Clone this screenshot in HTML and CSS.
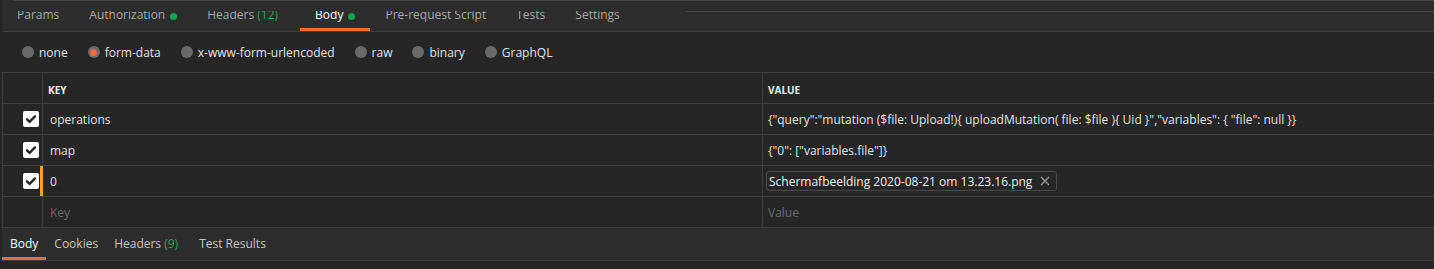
FILE: index.html
```html
<!DOCTYPE html>
<html>
<head>
<meta charset="utf-8">
<link rel="stylesheet" href="styles.css">
</head>
<body>
<div class="page">
  <div class="top-strip"></div>
  <div class="req-tabs">
    <div class="tab"><span class="lbl">Params</span></div>
    <div class="tab"><span class="lbl">Authorization</span><span class="dot"></span></div>
    <div class="tab"><span class="lbl">Headers <span class="count">(12)</span></span></div>
    <div class="tab active"><span class="lbl">Body</span><span class="dot"></span></div>
    <div class="tab"><span class="lbl">Pre-request Script</span></div>
    <div class="tab"><span class="lbl">Tests</span></div>
    <div class="tab"><span class="lbl">Settings</span></div>
  </div>
  <div class="body-types">
    <label class="radio"><span class="circle"></span>none</label>
    <label class="radio"><span class="circle on"></span>form-data</label>
    <label class="radio"><span class="circle"></span>x-www-form-urlencoded</label>
    <label class="radio"><span class="circle"></span>raw</label>
    <label class="radio"><span class="circle"></span>binary</label>
    <label class="radio"><span class="circle"></span>GraphQL</label>
  </div>
  <div class="table">
    <div class="row head">
      <div class="c-check"></div>
      <div class="c-key">KEY</div>
      <div class="c-val">VALUE</div>
    </div>
    <div class="row">
      <div class="c-check"><span class="cb"><svg viewBox="0 0 16 16" width="16" height="16"><path d="M4 8.3l2.6 2.6L12 5.4" fill="none" stroke="#262626" stroke-width="2.4" stroke-linecap="round" stroke-linejoin="round"/></svg></span></div>
      <div class="c-key">operations</div>
      <div class="c-val">{"query":"mutation ($file: Upload!){ uploadMutation( file: $file ){ Uid }","variables": { "file": null }}</div>
    </div>
    <div class="row">
      <div class="c-check"><span class="cb"><svg viewBox="0 0 16 16" width="16" height="16"><path d="M4 8.3l2.6 2.6L12 5.4" fill="none" stroke="#262626" stroke-width="2.4" stroke-linecap="round" stroke-linejoin="round"/></svg></span></div>
      <div class="c-key">map</div>
      <div class="c-val">{"0": ["variables.file"]}</div>
    </div>
    <div class="row">
      <div class="c-check"><span class="cb"><svg viewBox="0 0 16 16" width="16" height="16"><path d="M4 8.3l2.6 2.6L12 5.4" fill="none" stroke="#262626" stroke-width="2.4" stroke-linecap="round" stroke-linejoin="round"/></svg></span></div>
      <div class="c-key focus">0</div>
      <div class="c-val"><span class="chip">Schermafbeelding 2020-08-21 om 13.23.16.png <svg class="x" viewBox="0 0 10 10" width="10" height="10"><path d="M1 1L9 9M9 1L1 9" stroke="#9a9a9a" stroke-width="1.3"/></svg></span></div>
    </div>
    <div class="row">
      <div class="c-check"></div>
      <div class="c-key ph">Key</div>
      <div class="c-val ph">Value</div>
    </div>
  </div>
  <div class="resp-tabs">
    <div class="rtab active"><span>Body</span></div>
    <div class="rtab"><span>Cookies</span></div>
    <div class="rtab"><span>Headers <span class="count">(9)</span></span></div>
    <div class="rtab last"><span>Test Results</span></div>
  </div>
</div>
</body>
</html>
```
FILE: styles.css
```css
html, body {
  margin: 0;
  padding: 0;
  background: #262626;
}
.page {
  width: 1434px;
  height: 269px;
  overflow: hidden;
  font-family: "Open Sans", "Liberation Sans", sans-serif;
  font-size: 12px;
  color: #e2e2e2;
}
.top-strip {
  height: 10px;
  border-top: 1px solid #454545;
  margin-left: 13px;
  background: #2d2d2d;
  box-shadow: -11px 0 0 #2d2d2d;
}
.req-tabs {
  display: flex;
  height: 20px;
  margin-left: 2px;
  background: #2d2d2d;
  border-bottom: 1px solid #3f3f3f;
  position: relative;
  overflow: hidden;
}
.req-tabs::before {
  content: "";
  position: absolute;
  left: 684px;
  right: 0;
  top: 0;
  height: 1px;
  background: #444;
}
.tab {
  display: flex;
  align-items: flex-start;
  padding: 0 15px;
  color: #a8a8a8;
  position: relative;
  line-height: 16px;
}
.lbl {
  display: block;
  margin-top: -4px;
}
.tab.active {
  color: #fff;
}
.tab.active::after {
  content: "";
  position: absolute;
  left: 0;
  right: 0;
  bottom: 0;
  height: 3px;
  background: #f26b3a;
}
.dot {
  display: block;
  width: 7px;
  height: 7px;
  border-radius: 50%;
  background: #0fa751;
  margin-left: 5px;
  margin-top: 2px;
}
.count {
  color: #26a35b;
}
.req-tabs .count {
  margin-right: 7px;
}
.body-types {
  display: flex;
  align-items: center;
  height: 40px;
  padding-left: 22px;
  gap: 20px;
}
.radio {
  display: flex;
  align-items: center;
  color: #e2e2e2;
}
.circle {
  width: 12px;
  height: 12px;
  border-radius: 50%;
  background: #6a6a6a;
  margin-right: 5px;
  display: flex;
  align-items: center;
  justify-content: center;
}
.circle.on::after {
  content: "";
  width: 7px;
  height: 7px;
  border-radius: 50%;
  background: #f26b3a;
}
.table {
  margin-left: 2px;
  border-top: 1px solid #3d3d3d;
  border-left: 1px solid #3d3d3d;
}
.row {
  display: flex;
  height: 30px;
  border-bottom: 1px solid #3d3d3d;
}
.c-check {
  width: 39px;
  flex: none;
  display: flex;
  align-items: center;
  justify-content: flex-end;
}
.c-key {
  width: 720px;
  flex: none;
  border-left: 1px solid #3d3d3d;
  display: flex;
  align-items: center;
  padding-left: 7px;
  box-sizing: border-box;
  position: relative;
}
.c-key.focus::before {
  content: "";
  position: absolute;
  left: -3px;
  top: 0;
  bottom: 0;
  width: 3px;
  background: #f6a623;
}
.c-val {
  flex: 1;
  border-left: 1px solid #3d3d3d;
  display: flex;
  align-items: center;
  padding-left: 5px;
  white-space: nowrap;
}
.head .c-key, .head .c-val {
  font-size: 10px;
  font-weight: 700;
  color: #f0f0f0;
  padding-top: 3px;
}
.head .c-key { padding-left: 5px; }
.cb {
  width: 16px;
  height: 16px;
  border-radius: 2px;
  background: #fff;
  display: block;
  margin-right: 3px;
}
.cb svg { display: block; }
.chip {
  display: inline-flex;
  align-items: center;
  height: 18px;
  border: 1px solid #4a4a4a;
  border-radius: 3px;
  padding: 0 6px 0 2px;
  margin-left: -2px;
  color: #f0f0f0;
}
.chip .x { margin-left: 8px; }
.ph { color: #6a6a6a; }
.resp-tabs {
  display: flex;
  height: 32px;
  margin-left: 2px;
  background: #2d2d2d;
  border-bottom: 1px solid #3a3a3a;
}
.rtab {
  display: flex;
  align-items: center;
  padding: 0 8px 2px;
  color: #c4c4c4;
  position: relative;
}
.rtab.active { color: #fff; }
.rtab.active::after {
  content: "";
  position: absolute;
  left: 0;
  right: 0;
  bottom: 0;
  height: 3px;
  background: #f26b3a;
}
.rtab.last { margin-left: 5px; }
```
